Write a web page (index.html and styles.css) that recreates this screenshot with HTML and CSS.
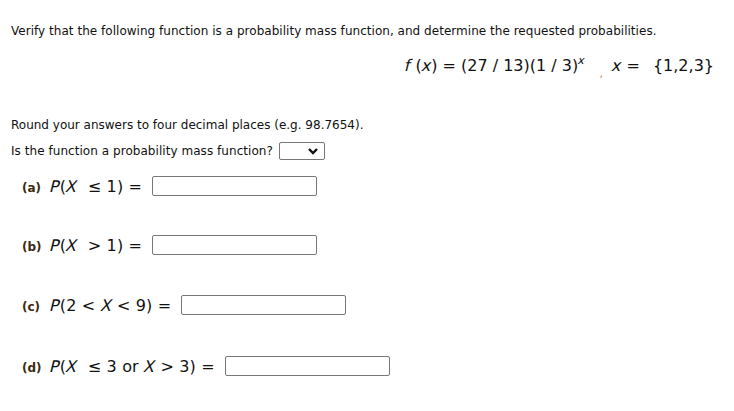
FILE: index.html
```html
<!DOCTYPE html>
<html>
<head>
<meta charset="utf-8">
<link rel="stylesheet" href="styles.css">
</head>
<body>
<div class="page">
  <p class="intro">Verify that the following function is a probability mass function, and determine the requested probabilities.</p>
  <div class="formula"><span class="m fm"><i>f</i> (<i>x</i>) = (27 / 13)(1 / 3)<sup><i>x</i></sup></span><span class="comma">,</span><span class="m fm"><i>x</i> = <span class="set">{1,2,3}</span></span></div>
  <p class="round">Round your answers to four decimal places (e.g. 98.7654).</p>
  <div class="pmf">Is the function a probability mass function? <span class="select"><svg width="12" height="8" viewBox="0 0 12 8"><path d="M2 2 L6 6 L10 2" fill="none" stroke="#111" stroke-width="2.4"/></svg></span></div>
  <div class="q q-a"><span class="lbl">(a)</span><span class="m"><i>P</i>(<i>X</i> &nbsp;≤ 1) = </span><span class="box"></span></div>
  <div class="q q-b"><span class="lbl">(b)</span><span class="m"><i>P</i>(<i>X</i> &nbsp;&gt; 1) = </span><span class="box"></span></div>
  <div class="q q-c"><span class="lbl">(c)</span><span class="m"><i>P</i>(2 &lt; <i>X</i> &lt; 9) = </span><span class="box"></span></div>
  <div class="q q-d"><span class="lbl">(d)</span><span class="m"><i>P</i>(<i>X</i> &nbsp;≤ 3 or <i>X</i> &gt; 3) = </span><span class="box"></span></div>
</div>
</body>
</html>
```
FILE: styles.css
```css
html, body { margin: 0; padding: 0; background: #fff; }
body { font-family: "DejaVu Sans", Verdana, sans-serif; color: #111; }
.page { padding: 0 0 0 11px; width: 723px; }
.intro { margin: 0; padding-top: 23px; font-size: 12px; line-height: 16px; letter-spacing: 0.03px; }
.formula { display: flex; justify-content: flex-end; align-items: baseline; padding-right: 20px; margin-top: 17px; height: 24px; }
.m { font-size: 16px; color: #111; letter-spacing: 0.15px; }
.fm { letter-spacing: 0; }
.m i { font-style: normal; display: inline-block; transform: skewX(-14deg); }
.set { margin-left: 8px; }
sup { font-size: 11px; vertical-align: 7px; line-height: 0; }
.comma { color: #c07020; font-size: 10px; position: relative; top: 6px; margin: 0 9px 0 15px; }
.round { margin: 0; margin-top: 37px; font-size: 12px; line-height: 16px; }
.pmf { margin-top: 8px; font-size: 12px; display: flex; align-items: center; height: 20px; letter-spacing: 0.05px; }
.select { display: inline-flex; align-items: center; justify-content: flex-end; width: 44px; height: 16px; border: 1px solid #777; border-radius: 2px; margin-left: 6px; }
.select svg { margin-right: 5px; }
.q { display: flex; align-items: center; height: 22px; padding-left: 11px; }
.q-a { margin-top: 14px; }
.q-b { margin-top: 37px; }
.q-c { margin-top: 38px; }
.q-d { margin-top: 39px; }
.lbl { font-weight: bold; font-size: 12px; color: #3a2a10; width: 28px; padding-top: 4px; }
.box { display: inline-block; width: 163px; height: 18px; border: 1px solid #777; border-radius: 2px; margin-left: 10px; }
```
